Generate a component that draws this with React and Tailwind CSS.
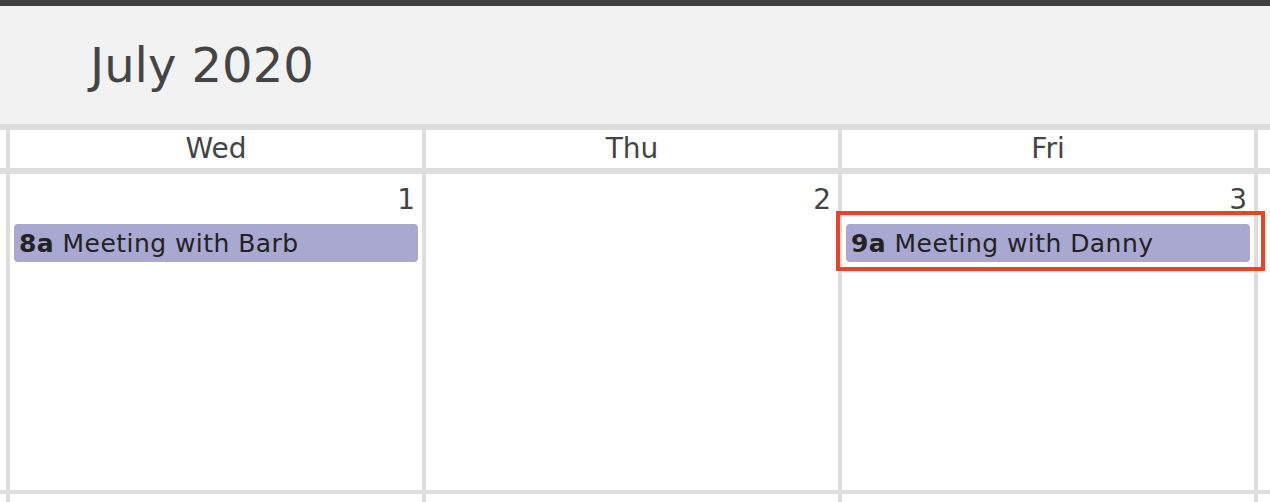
import React from "react";

const font = { fontFamily: '"DejaVu Sans", Verdana, sans-serif' };

const days = [
  { name: "", date: "", event: null },
  { name: "Wed", date: "1", event: { time: "8a", title: "Meeting with Barb" } },
  { name: "Thu", date: "2", event: null },
  { name: "Fri", date: "3", event: { time: "9a", title: "Meeting with Danny" } },
  { name: "", date: "", event: null },
];

function Row({ className = "", children }) {
  return (
    <div className={`grid grid-cols-[6px_412px_412px_412px_1fr] gap-x-[4px] ${className}`}>
      {children}
    </div>
  );
}

export default function App() {
  return (
    <div className="relative w-[1270px] h-[502px] overflow-hidden bg-white" style={font}>
      <div className="h-[6px] bg-[#404040]" />

      {/* month header */}
      <div className="h-[118px] bg-[#f2f2f2] flex items-center pl-[90px]">
        <h1 className="text-[48px] leading-none text-[#444444]">July 2020</h1>
      </div>

      {/* calendar grid */}
      <div className="bg-[#dddddd] pt-[6px] flex flex-col">
        <Row className="h-[38px]">
          {days.map((d, i) => (
            <div key={i} className="bg-white flex items-center justify-center text-[28px] leading-none text-[#444444]">
              {d.name}
            </div>
          ))}
        </Row>

        <Row className="mt-[6px] h-[316px]">
          {days.map((d, i) => (
            <div key={i} className="bg-white flex flex-col">
              <div className="pt-[12px] pr-[7px] text-right text-[28px] leading-none text-[#444444] h-[40px]">
                {d.date}
              </div>
              {d.event && (
                <div className="mt-[10px] mx-[4px] h-[38px] rounded-[4px] bg-[#a9a8d1] flex items-center pl-[5px] text-[25px] tracking-[0.45px] leading-none text-[#222222] whitespace-nowrap">
                  <span className="font-bold">{d.event.time}</span>
                  <span>&nbsp;{d.event.title}</span>
                </div>
              )}
            </div>
          ))}
        </Row>

        <Row className="mt-[4px] h-[40px]">
          {days.map((d, i) => (
            <div key={i} className="bg-white" />
          ))}
        </Row>
      </div>

      {/* highlight annotation */}
      <div className="absolute left-[836px] top-[211px] w-[429px] h-[60px] border-[4px] border-[#e8442a]" />
    </div>
  );
}
